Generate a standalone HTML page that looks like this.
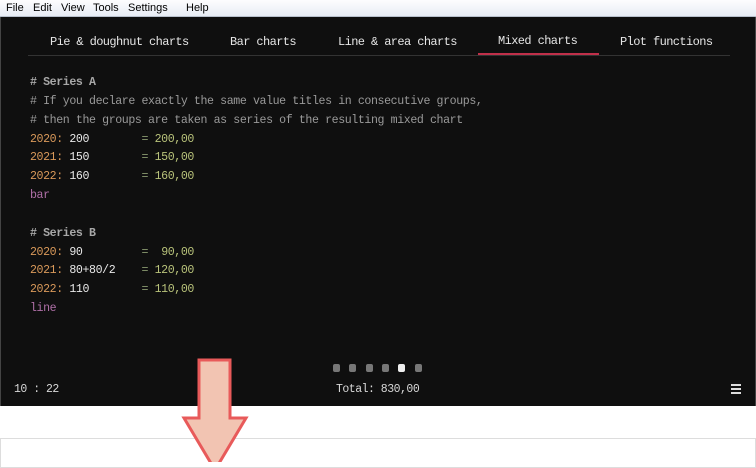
<!DOCTYPE html>
<html><head><style>
*{margin:0;padding:0;box-sizing:border-box}
body{width:756px;height:462px;overflow:hidden;background:#fff;position:relative;font-family:"Liberation Mono",monospace}
.menu{position:absolute;left:0;top:0;width:756px;height:17px;background:linear-gradient(#fdfdfe,#e8edf5);border-bottom:1px solid #b8c0cc;font-family:"Liberation Sans",sans-serif;font-size:11px;color:#000}
.menu span{position:absolute;top:2px}
.dark{position:absolute;left:0;top:17px;width:756px;height:389px;background:#0f0f0f;border-left:1px solid #444;border-right:1px solid #444}
.tab{position:absolute;font-size:12px;color:#e6e6e6;white-space:nowrap;letter-spacing:-0.6px}
.gl{position:absolute;left:27px;width:702px;height:1px;background:#333}
.rl{position:absolute;left:477px;width:121px;height:2px;background:#c0304a}
pre{position:absolute;left:30px;top:74px;font-family:"Liberation Mono",monospace;font-size:11.6px;letter-spacing:-0.4px;line-height:18.85px;color:#e8e8e8}
.c{color:#9a9a9a}.h{color:#a8a8a8;font-weight:bold}.y{color:#d9995a}.g{color:#b8c27a}.p{color:#b070a8}.e{color:#8a9a70}
.dot{position:absolute;top:364px;width:7px;height:8px;border-radius:2px;background:#777}
.st{position:absolute;top:383px;font-size:11.5px;letter-spacing:-0.5px;color:#d8d8d8}
.ham{position:absolute;left:731px;width:10px;height:2px;background:#ddd}
.box{position:absolute;left:0;top:438px;width:756px;height:30px;border:1px solid #ddd;background:#fff}
</style></head><body>
<div class="menu"><span style="left:6px">File</span><span style="left:33px">Edit</span><span style="left:61px">View</span><span style="left:93px">Tools</span><span style="left:128px">Settings</span><span style="left:186px">Help</span></div>
<div class="dark">
<div class="tab" style="left:49px;top:18px">Pie &amp; doughnut charts</div>
<div class="tab" style="left:229px;top:18px">Bar charts</div>
<div class="tab" style="left:337px;top:18px">Line &amp; area charts</div>
<div class="tab" style="left:497px;top:17px">Mixed charts</div>
<div class="tab" style="left:619px;top:18px">Plot functions</div>
<div class="gl" style="top:38px"></div>
<div class="rl" style="top:36px"></div>
</div>
<pre><span class="h"># Series A</span>
<span class="c"># If you declare exactly the same value titles in consecutive groups,</span>
<span class="c"># then the groups are taken as series of the resulting mixed chart</span>
<span class="y">2020:</span> 200        <span class="e">=</span> <span class="g">200,00</span>
<span class="y">2021:</span> 150        <span class="e">=</span> <span class="g">150,00</span>
<span class="y">2022:</span> 160        <span class="e">=</span> <span class="g">160,00</span>
<span class="p">bar</span>

<span class="h"># Series B</span>
<span class="y">2020:</span> 90         <span class="e">=</span>  <span class="g">90,00</span>
<span class="y">2021:</span> 80+80/2    <span class="e">=</span> <span class="g">120,00</span>
<span class="y">2022:</span> 110        <span class="e">=</span> <span class="g">110,00</span>
<span class="p">line</span></pre>
<div class="dot" style="left:333px"></div><div class="dot" style="left:349px"></div><div class="dot" style="left:366px"></div><div class="dot" style="left:382px"></div><div class="dot" style="left:398px;background:#eee"></div><div class="dot" style="left:415px"></div>
<div class="st" style="left:14px">10 : 22</div>
<div class="st" style="left:336px">Total: 830,00</div>
<div class="ham" style="top:384px"></div><div class="ham" style="top:388px"></div><div class="ham" style="top:392px"></div>
<div class="box"></div>
<svg style="position:absolute;left:0;top:0" width="756" height="462"><path d="M199 360 H230 V418 H246 L215 470 L184 418 H199 Z" fill="#f2c4b2" stroke="#e85a5a" stroke-width="3" stroke-linejoin="miter"/></svg>
</body></html>
